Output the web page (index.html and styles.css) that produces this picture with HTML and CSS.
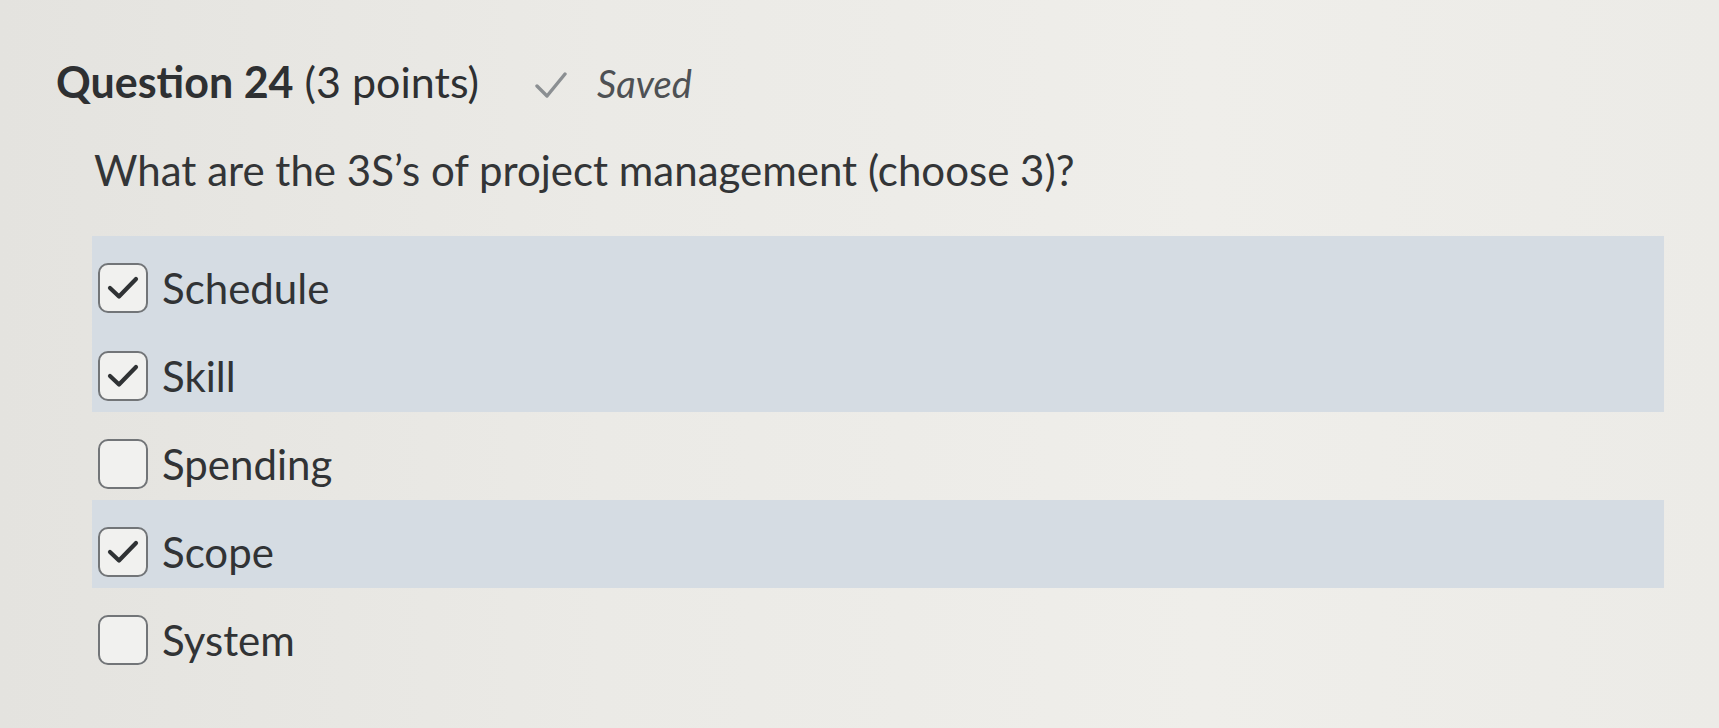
FILE: index.html
```html
<!DOCTYPE html>
<html lang="en">
<head>
<meta charset="utf-8">
<title>Question 24</title>
<link rel="stylesheet" href="styles.css">
</head>
<body>
<main class="page">
  <header class="qhead">
    <h1 class="qtitle"><span class="qnum">Question 24</span> <span class="qpts">(3 points)</span></h1>
    <span class="saved">
      <svg class="saved-icon" width="32" height="28" viewBox="0 0 32 28" aria-hidden="true"><path d="M2 15 L12 25 L30 3" fill="none" stroke="#8b8f92" stroke-width="3.4" stroke-linecap="round" stroke-linejoin="round"/></svg>
      <span class="saved-text">Saved</span>
    </span>
  </header>
  <p class="prompt">What are the 3S’s of project management (choose 3)?</p>
  <ul class="options">
    <li class="opt checked"><span class="box"><svg viewBox="0 0 50 50" width="50" height="50" aria-hidden="true"><path d="M12 25 L21 33.5 L38 16" fill="none" stroke="#2f3234" stroke-width="4.2" stroke-linecap="round" stroke-linejoin="round"/></svg></span><span class="label">Schedule</span></li>
    <li class="opt checked"><span class="box"><svg viewBox="0 0 50 50" width="50" height="50" aria-hidden="true"><path d="M12 25 L21 33.5 L38 16" fill="none" stroke="#2f3234" stroke-width="4.2" stroke-linecap="round" stroke-linejoin="round"/></svg></span><span class="label">Skill</span></li>
    <li class="opt"><span class="box"></span><span class="label">Spending</span></li>
    <li class="opt checked"><span class="box"><svg viewBox="0 0 50 50" width="50" height="50" aria-hidden="true"><path d="M12 25 L21 33.5 L38 16" fill="none" stroke="#2f3234" stroke-width="4.2" stroke-linecap="round" stroke-linejoin="round"/></svg></span><span class="label">Scope</span></li>
    <li class="opt"><span class="box"></span><span class="label">System</span></li>
  </ul>
</main>
</body>
</html>
```

FILE: styles.css
```css
html, body {
  margin: 0;
  padding: 0;
}
body {
  width: 1719px;
  height: 728px;
  overflow: hidden;
  background: linear-gradient(90deg, #e4e3df 0%, #ebeae6 35%, #efeeea 70%, #ecebe7 100%);
  font-family: Lato, "Open Sans", sans-serif;
  color: #333537;
}
.page {
  padding: 56px 0 0 56px;
}
.qhead {
  display: flex;
  align-items: baseline;
}
.qtitle {
  margin: 0;
  font-size: 43px;
  line-height: 52px;
  font-weight: 400;
  color: #2e3032;
}
.qnum {
  font-weight: 700;
}
.saved {
  display: inline-flex;
  align-items: baseline;
  margin-left: 56px;
}
.saved-icon {
  align-self: center;
  margin-right: 30px;
  position: relative;
  top: 2px;
}
.saved-text {
  font-style: italic;
  font-size: 38px;
  color: #4e5154;
}
.prompt {
  margin: 37px 0 0 38px;
  font-size: 42px;
  line-height: 50px;
}
.options {
  list-style: none;
  margin: 41px 0 0 36px;
  padding: 0;
  width: 1572px;
}
.opt {
  display: flex;
  align-items: center;
  gap: 14px;
  height: 88px;
  box-sizing: border-box;
  padding: 16px 0 0 6px;
}
.opt.checked {
  background: #d5dce3;
}
.box {
  width: 50px;
  height: 50px;
  box-sizing: border-box;
  border: 2.5px solid #727578;
  border-radius: 10px;
  background: #f1f1ef;
  display: flex;
  align-items: center;
  justify-content: center;
  flex: none;
}
.box svg {
  display: block;
  margin: -2.5px;
}
.label {
  font-size: 42px;
  line-height: 50px;
  color: #313335;
}
```
